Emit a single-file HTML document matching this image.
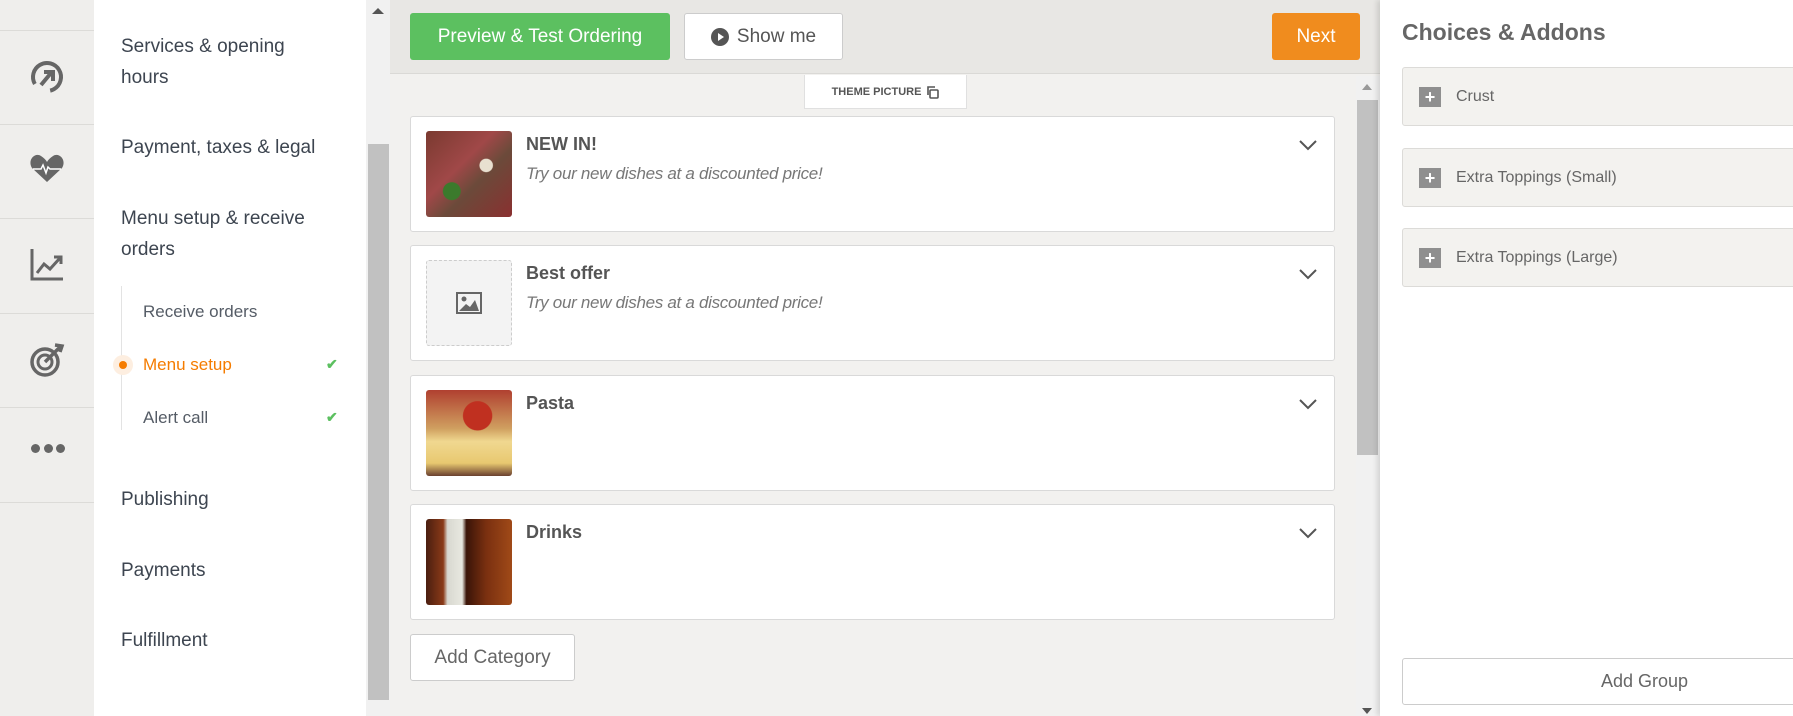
<!DOCTYPE html>
<html><head><meta charset="utf-8"><style>
*{box-sizing:border-box;margin:0;padding:0}
body{width:1793px;height:716px;overflow:hidden;font-family:"Liberation Sans",sans-serif;background:#fff;position:relative}
.abs{position:absolute}
.rail{left:0;top:0;width:94px;height:716px;background:#efeeec}
.rail .ln{position:absolute;left:0;width:94px;height:1px;background:#dcdbd8}
.side{left:94px;top:0;width:272px;height:716px;background:#fff}
.st{position:absolute;left:27px;font-size:19px;color:#3d4550;line-height:31px}
.sub{position:absolute;left:49px;font-size:17px;color:#555c66}
.chk{position:absolute;left:232px;color:#5cc060;font-size:14px;font-weight:bold}
.sb{background:#f1f1f1}
.thumb{background:#c1c1c1}
.main{left:390px;top:0;width:990px;height:716px;background:#f2f1ef}
.top{left:390px;top:0;width:990px;height:74px;background:#e8e7e4;border-bottom:1px solid #dad9d6}
.btn{position:absolute;border-radius:3px;font-size:19px;display:flex;align-items:center;justify-content:center;white-space:nowrap}
.card{position:absolute;left:410px;width:925px;background:#fff;border:1px solid #d9d9d9;border-radius:3px}
.card .img{position:absolute;left:15px;top:14px;width:86px;height:86px;border-radius:3px}
.card .t{position:absolute;left:115px;top:17px;font-size:18px;font-weight:bold;color:#555}
.card .d{position:absolute;left:115px;top:47px;font-size:17px;font-style:italic;color:#777;letter-spacing:-0.3px}
.card svg.ch{position:absolute;left:888px;top:22px}
.right{left:1380px;top:0;width:413px;height:716px;background:#fff;box-shadow:-3px 0 5px rgba(0,0,0,.12)}
.acc{position:absolute;left:22px;width:400px;height:59px;background:#f3f2ef;border:1px solid #dcdbd8;border-radius:3px}
.acc .p{position:absolute;left:16px;top:19px;width:22px;height:20px;background:#8f8f8f;color:#fff;font-size:18px;line-height:20px;text-align:center;font-weight:bold}
.acc .l{position:absolute;left:53px;top:20px;font-size:16px;color:#666}
</style></head><body>
<div class="abs rail">
<div class="ln" style="top:30px"></div><div class="ln" style="top:124px"></div><div class="ln" style="top:218px"></div><div class="ln" style="top:313px"></div><div class="ln" style="top:407px"></div><div class="ln" style="top:502px"></div>
<svg class="abs" style="left:29px;top:59px" width="36" height="36" viewBox="0 0 36 36"><circle cx="18" cy="18" r="14" fill="none" stroke="#666" stroke-width="4" stroke-dasharray="70 18" transform="rotate(150 18 18)"/><path d="M12 26 L22 14 M15 13 H24 V22" stroke="#666" stroke-width="4" fill="none"/></svg>
<svg class="abs" style="left:29px;top:154px" width="36" height="30" viewBox="0 0 36 30"><path d="M18 28 L3 14 C-2 6 6 -2 12 2 C15 4 17 6 18 8 C19 6 21 4 24 2 C30 -2 38 6 33 14 Z" fill="#666"/><path d="M4 15 H12 L14 11 L17 19 L19 13 L21 15 H32" stroke="#fff" stroke-width="1.5" fill="none"/></svg>
<svg class="abs" style="left:30px;top:247px" width="34" height="34" viewBox="0 0 34 34"><path d="M2 2 V32 H33" stroke="#666" stroke-width="3" fill="none"/><path d="M7 26 L14 17 L20 22 L30 11 M24 10 H31 V17" stroke="#666" stroke-width="3" fill="none"/></svg>
<svg class="abs" style="left:29px;top:342px" width="36" height="36" viewBox="0 0 36 36"><circle cx="16" cy="20" r="13" fill="none" stroke="#666" stroke-width="3.5"/><circle cx="16" cy="20" r="7" fill="none" stroke="#666" stroke-width="3"/><path d="M16 20 L31 5 M26 3 L33 4 L31 10" stroke="#666" stroke-width="3.5" fill="none"/></svg>
<div class="abs" style="left:31px;top:444px;width:34px;height:10px;display:flex;justify-content:space-between"><i style="width:9px;height:9px;border-radius:50%;background:#666"></i><i style="width:9px;height:9px;border-radius:50%;background:#666"></i><i style="width:9px;height:9px;border-radius:50%;background:#666"></i></div>
</div>
<div class="abs side">
<div class="st" style="top:31px">Services &amp; opening<br>hours</div>
<div class="st" style="top:132px">Payment, taxes &amp; legal</div>
<div class="st" style="top:203px">Menu setup &amp; receive<br>orders</div>
<div class="abs" style="left:27px;top:286px;width:1px;height:144px;background:#e3e3e3"></div>
<div class="sub" style="top:302px">Receive orders</div>
<div class="abs" style="left:19px;top:355px;width:20px;height:20px;border-radius:50%;background:#fdeee0"></div>
<div class="abs" style="left:25px;top:361px;width:8px;height:8px;border-radius:50%;background:#f57c00"></div>
<div class="sub" style="top:355px;color:#f57c00">Menu setup</div><div class="chk" style="top:356px">✔</div>
<div class="sub" style="top:408px">Alert call</div><div class="chk" style="top:409px">✔</div>
<div class="st" style="top:484px">Publishing</div>
<div class="st" style="top:555px">Payments</div>
<div class="st" style="top:625px">Fulfillment</div>
</div>
<div class="abs sb" style="left:366px;top:0;width:24px;height:716px"></div>
<div class="abs thumb" style="left:368px;top:144px;width:21px;height:556px"></div>
<div class="abs" style="left:372px;top:8px;width:0;height:0;border-left:6px solid transparent;border-right:6px solid transparent;border-bottom:6px solid #555"></div>
<div class="abs main"></div>
<div class="abs top">
<div class="btn" style="left:20px;top:13px;width:260px;height:47px;background:#5cc060;color:#fff;font-size:19px">Preview &amp; Test Ordering</div>
<div class="btn" style="left:294px;top:13px;width:159px;height:47px;background:#fff;border:1px solid #ccc;color:#555"><span style="display:inline-block;width:18px;height:18px;border-radius:50%;background:#555;margin-right:8px;position:relative"><span style="position:absolute;left:7px;top:5px;border-left:6px solid #fff;border-top:4px solid transparent;border-bottom:4px solid transparent"></span></span>Show me</div>
<div class="btn" style="left:882px;top:13px;width:88px;height:47px;background:#f08c1e;color:#fff">Next</div>
</div>
<div class="abs" style="left:804px;top:75px;width:163px;height:34px;background:#fff;border:1px solid #e0e0e0;border-top:none;font-size:11px;font-weight:bold;color:#555;display:flex;align-items:center;justify-content:center;gap:6px">THEME PICTURE <svg width="12" height="14" viewBox="0 0 12 14"><rect x="3" y="5" width="8" height="8" rx="1" fill="none" stroke="#555" stroke-width="1.6"/><path d="M1 10 V2 H8" fill="none" stroke="#555" stroke-width="1.6"/></svg></div>
<div class="card" style="top:116px;height:116px"><div class="img" style="background:radial-gradient(circle at 70% 40%,#e8e0d0 0 8%,transparent 9%),radial-gradient(circle at 30% 70%,#3b7a2c 0 10%,transparent 11%),linear-gradient(135deg,#7a3a30,#a04848 40%,#6b4a3a 60%,#8a3030)"></div><div class="t">NEW IN!</div><div class="d">Try our new dishes at a discounted price!</div><svg class="ch" width="18" height="12" viewBox="0 0 18 12"><path d="M1 2 L9 10 L17 2" stroke="#555" stroke-width="2" fill="none"/></svg></div>
<div class="card" style="top:245px;height:116px"><div class="img" style="background:#f3f3f3;border:1px dashed #ccc;display:flex;align-items:center;justify-content:center"><svg width="26" height="22" viewBox="0 0 26 22"><rect x="1" y="1" width="24" height="20" fill="none" stroke="#666" stroke-width="2"/><circle cx="8" cy="7" r="2.5" fill="#666"/><path d="M3 19 L10 12 L14 15 L19 8 L23 19 Z" fill="#666"/></svg></div><div class="t">Best offer</div><div class="d">Try our new dishes at a discounted price!</div><svg class="ch" width="18" height="12" viewBox="0 0 18 12"><path d="M1 2 L9 10 L17 2" stroke="#555" stroke-width="2" fill="none"/></svg></div>
<div class="card" style="top:375px;height:116px"><div class="img" style="background:radial-gradient(circle at 60% 30%,#c03020 0 18%,transparent 19%),linear-gradient(180deg,#b04030 0%,#d0a060 45%,#f0d890 60%,#e8c870 85%,#6a4030 100%)"></div><div class="t">Pasta</div><svg class="ch" width="18" height="12" viewBox="0 0 18 12"><path d="M1 2 L9 10 L17 2" stroke="#555" stroke-width="2" fill="none"/></svg></div>
<div class="card" style="top:504px;height:116px"><div class="img" style="background:linear-gradient(90deg,#4a1e10 0,#8a3a18 20%,#d8d8d0 25%,#e8e8e0 42%,#3a1408 47%,#7a3010 70%,#a04a18 100%)"></div><div class="t">Drinks</div><svg class="ch" width="18" height="12" viewBox="0 0 18 12"><path d="M1 2 L9 10 L17 2" stroke="#555" stroke-width="2" fill="none"/></svg></div>
<div class="btn" style="left:410px;top:634px;width:165px;height:47px;background:#fff;border:1px solid #ccc;color:#666">Add Category</div>
<div class="abs" style="left:1356px;top:76px;width:24px;height:640px;background:#f1f1f1"></div>
<div class="abs thumb" style="left:1357px;top:100px;width:21px;height:355px"></div>
<div class="abs" style="left:1362px;top:84px;border-left:5px solid transparent;border-right:5px solid transparent;border-bottom:6px solid #999"></div>
<div class="abs" style="left:1362px;top:708px;border-left:5px solid transparent;border-right:5px solid transparent;border-top:6px solid #555"></div>
<div class="abs right">
<div class="abs" style="left:22px;top:19px;font-size:23px;font-weight:bold;color:#666">Choices &amp; Addons</div>
<div class="acc" style="top:67px"><div class="p">+</div><div class="l">Crust</div></div>
<div class="acc" style="top:148px"><div class="p">+</div><div class="l">Extra Toppings (Small)</div></div>
<div class="acc" style="top:228px"><div class="p">+</div><div class="l">Extra Toppings (Large)</div></div>
<div class="abs" style="left:22px;top:658px;width:400px;height:47px;border:1px solid #ccc;border-radius:3px;background:#fff;font-size:18px;color:#666;padding-left:198px;line-height:45px">Add Group</div>
</div>
</body></html>
